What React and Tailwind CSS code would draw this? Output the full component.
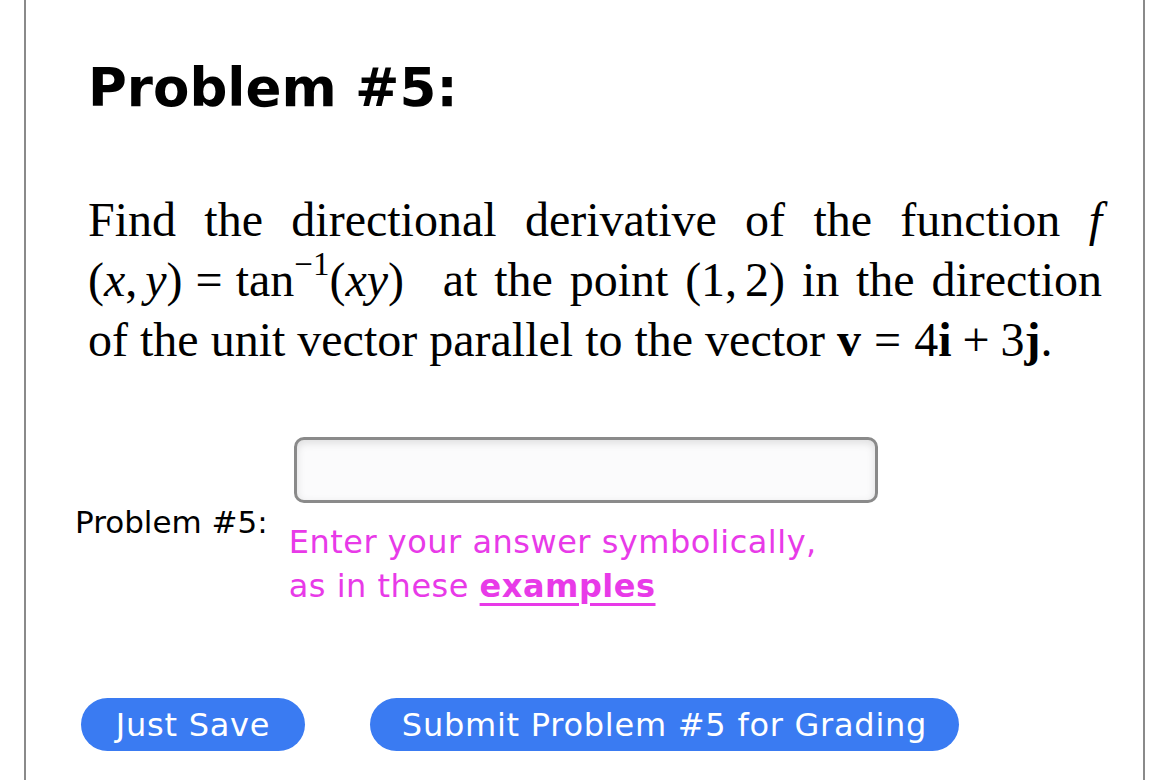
export default function App() {
  const serif = { fontFamily: '"Liberation Serif", "Times New Roman", serif' };
  return (
    <div className="min-h-[780px] bg-white" style={{ fontFamily: '"DejaVu Sans", Verdana, sans-serif' }}>
      <div className="ml-[24px] w-[1121px] min-h-[780px] border-l-2 border-r-2 border-[#8a8a8a] pt-[58px]">
        {/* Heading */}
        <h1 className="pl-[62px] text-[53px] leading-[60px] font-bold text-black">Problem #5:</h1>

        {/* Problem text */}
        <div
          className="mt-[72px] pl-[62px] pr-[41px] text-[48px] leading-[60px] text-black"
          style={serif}
        >
          <div className="text-justify [text-align-last:justify]">
            Find the directional derivative of the function <i>f</i>
          </div>
          <div className="text-justify [text-align-last:justify]">
            <span className="inline-block whitespace-nowrap mr-[22px]">
              (<i>x</i>,<span className="ml-[8px]" /><i>y</i>)<span className="mx-[13px]">=</span>tan
              <span className="relative -top-[21px] text-[33px] leading-none">−1</span>(<i>xy</i>)
            </span>{' '}
            at the point <span className="inline-block whitespace-nowrap">(1,<span className="ml-[8px]" />2)</span> in the direction
          </div>
          <div>
            of the unit vector parallel to the vector{' '}
            <span className="inline-block whitespace-nowrap">
              <b>v</b>
              <span className="mx-[13px]">=</span>4<b>i</b>
              <span className="mx-[11px]">+</span>3<b>j</b>.
            </span>
          </div>
        </div>

        {/* Answer row */}
        <table className="mt-[67px] ml-[49px] border-collapse">
          <tbody>
            <tr>
              <td className="align-middle pr-[21px] text-[31px] text-black whitespace-nowrap">Problem #5:</td>
              <td className="align-middle">
                <div className="ml-[5px] w-[584px] h-[66px] rounded-[10px] border-[3px] border-[#8a8a8a] bg-[#fbfbfc] shadow-[inset_0_3px_8px_rgba(0,0,0,0.12)]" />
                <div className="mt-[17px] text-[32px] leading-[44px] tracking-[0.5px] text-[#e83ae8]">
                  Enter your answer symbolically,
                  <br />
                  as in these{' '}
                  <a href="#" className="font-bold underline decoration-[3px] underline-offset-[6px]">
                    examples
                  </a>
                </div>
              </td>
            </tr>
          </tbody>
        </table>

        {/* Buttons */}
        <div className="mt-[90px] ml-[55px] flex items-center gap-[65px]">
          <button className="h-[53px] w-[224px] rounded-full bg-[#3a7bf2] text-[32px] tracking-[0.75px] text-white">
            Just Save
          </button>
          <button className="h-[53px] w-[589px] rounded-full bg-[#3a7bf2] text-[32px] tracking-[0.75px] text-white">
            Submit Problem #5 for Grading
          </button>
        </div>
      </div>
    </div>
  );
}
